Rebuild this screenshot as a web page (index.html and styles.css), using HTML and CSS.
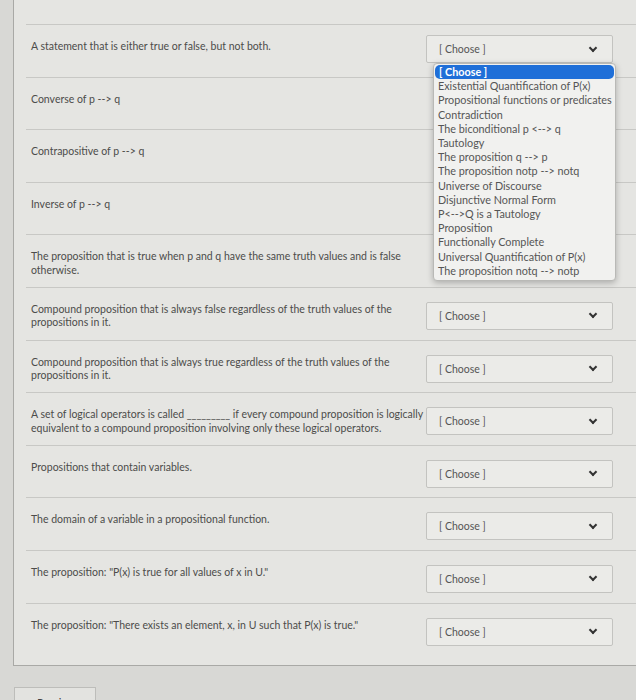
FILE: index.html
```html
<!DOCTYPE html>
<html>
<head>
<meta charset="utf-8">
<link rel="stylesheet" href="styles.css">
</head>
<body>
<div class="card">
  <div class="rows">
    <div class="row">
      <div class="q">A statement that is either true or false, but not both.</div>
      <div class="sel open"><span>[ Choose ]</span><i class="chev"></i>
        <ul class="menu">
          <li class="hl">[ Choose ]</li>
          <li>Existential Quantification of P(x)</li>
          <li>Propositional functions or predicates</li>
          <li>Contradiction</li>
          <li>The biconditional p &lt;--&gt; q</li>
          <li>Tautology</li>
          <li>The proposition q --&gt; p</li>
          <li>The proposition notp --&gt; notq</li>
          <li>Universe of Discourse</li>
          <li>Disjunctive Normal Form</li>
          <li>P&lt;--&gt;Q is a Tautology</li>
          <li>Proposition</li>
          <li>Functionally Complete</li>
          <li>Universal Quantification of P(x)</li>
          <li>The proposition notq --&gt; notp</li>
        </ul>
      </div>
    </div>
    <div class="row">
      <div class="q">Converse of p --&gt; q</div>
    </div>
    <div class="row">
      <div class="q">Contrapositive of p --&gt; q</div>
    </div>
    <div class="row">
      <div class="q">Inverse of p --&gt; q</div>
    </div>
    <div class="row">
      <div class="q">The proposition that is true when p and q have the same truth values and is false otherwise.</div>
    </div>
    <div class="row">
      <div class="q">Compound proposition that is always false regardless of the truth values of the propositions in it.</div>
      <div class="sel"><span>[ Choose ]</span><i class="chev"></i></div>
    </div>
    <div class="row">
      <div class="q">Compound proposition that is always true regardless of the truth values of the propositions in it.</div>
      <div class="sel"><span>[ Choose ]</span><i class="chev"></i></div>
    </div>
    <div class="row">
      <div class="q">A set of logical operators is called _________ if every compound proposition is logically equivalent to a compound proposition involving only these logical operators.</div>
      <div class="sel"><span>[ Choose ]</span><i class="chev"></i></div>
    </div>
    <div class="row">
      <div class="q">Propositions that contain variables.</div>
      <div class="sel"><span>[ Choose ]</span><i class="chev"></i></div>
    </div>
    <div class="row">
      <div class="q">The domain of a variable in a propositional function.</div>
      <div class="sel"><span>[ Choose ]</span><i class="chev"></i></div>
    </div>
    <div class="row">
      <div class="q">The proposition: "P(x) is true for all values of x in U."</div>
      <div class="sel"><span>[ Choose ]</span><i class="chev"></i></div>
    </div>
    <div class="row">
      <div class="q">The proposition: "There exists an element, x, in U such that P(x) is true."</div>
      <div class="sel"><span>[ Choose ]</span><i class="chev"></i></div>
    </div>
  </div>
</div>
<div class="btn">Previous</div>
</body>
</html>
```

FILE: styles.css
```css
html, body {
  margin: 0;
  padding: 0;
  background: #d8d8d5;
  font-family: Lato, "Open Sans", sans-serif;
  overflow: hidden;
}
.card {
  margin: -20px -30px 0 13px;
  border: 1px solid #a9a9a6;
  background: #e5e5e2;
  padding: 43px 0 10px 12px;
}
.rows {
  display: flex;
  flex-direction: column;
}
.row {
  box-sizing: border-box;
  height: 52.6px;
  border-top: 1px solid #c8c8c5;
  display: grid;
  grid-template-columns: 400px 187px;
  align-items: start;
}
.q {
  padding: 15px 0 0 5px;
  font-size: 10.5px;
  line-height: 13.5px;
  color: #4c4c4a;
}
.sel {
  position: relative;
  grid-column: 2;
  grid-row: 1;
  box-sizing: border-box;
  margin-top: 14px;
  height: 28px;
  border: 1px solid #c3c3c0;
  border-radius: 2px;
  background: #ebebe8;
  display: flex;
  align-items: center;
  justify-content: space-between;
  padding: 0 16px 0 12px;
  font-size: 10.5px;
  color: #555;
}
.row:first-child .sel {
  margin-top: 10px;
}
.chev {
  width: 4px;
  height: 4px;
  border-right: 2px solid #333;
  border-bottom: 2px solid #333;
  transform: rotate(45deg);
  margin-top: -3px;
}
.menu {
  position: absolute;
  left: 6px;
  top: 27px;
  width: 181px;
  margin: 0;
  padding: 1px 0 2px;
  list-style: none;
  background: #f1f1ef;
  border: 1px solid #b9b9b6;
  border-radius: 4px;
  box-shadow: 0 2px 6px rgba(0,0,0,0.25);
  z-index: 5;
}
.menu li {
  padding-left: 4px;
  font-size: 10.8px;
  line-height: 14.2px;
  color: #555;
  white-space: nowrap;
}
.menu li.hl {
  margin: 0 1px;
  background: #1f6fd8;
  color: #fff;
  font-weight: bold;
  border-radius: 5px;
}
.btn {
  margin: 21px 0 0 14px;
  width: 82px;
  height: 30px;
  box-sizing: border-box;
  border: 1px solid #bdbdba;
  background: #e3e3e0;
  font-size: 11px;
  color: #444;
  padding: 8px 0 0 22px;
}
```
